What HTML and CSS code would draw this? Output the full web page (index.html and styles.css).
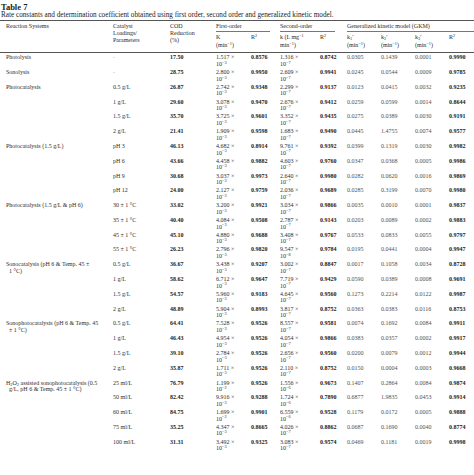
FILE: index.html
```html
<!DOCTYPE html>
<html>
<head>
<meta charset="utf-8">
<link rel="stylesheet" href="styles.css">
</head>
<body>
<div class="title">Table 7</div>
<div class="caption">Rate constants and determination coefficient obtained using first order, second order and generalized kinetic model.</div>
<table class="tbl">
<colgroup>
<col class="c1"><col class="c2"><col class="c3"><col class="c4"><col class="c5"><col class="c6"><col class="c7"><col class="c8"><col class="c9"><col class="c10"><col class="c11">
</colgroup>
<thead>
<tr class="h1">
<th class="first">Reaction Systems</th>
<th rowspan="2">Catalyst<br>Loadings/<br>Parameters</th>
<th rowspan="2">COD<br>Reduction<br>(%)</th>
<th colspan="2"><div class="grp g1">First-order</div></th>
<th colspan="2"><div class="grp g2">Second-order</div></th>
<th colspan="4"><div class="grp g3">Generalized kinetic model (GKM)</div></th>
</tr>
<tr class="h2">
<th class="first"></th>
<th>K<br>(min<sup>−1</sup>)</th>
<th>R<sup>2</sup></th>
<th>k (L mg<sup>−1</sup><br>min<sup>−1</sup>)</th>
<th>R<sup>2</sup></th>
<th>k<sub>1</sub>′<br>(min<sup>−1</sup>)</th>
<th>k<sub>2</sub>′<br>(min<sup>−1</sup>)</th>
<th>k<sub>3</sub>′<br>(min<sup>−1</sup>)</th>
<th>R<sup>2</sup></th>
</tr>
</thead>
<tbody id="body"></tbody>
</table>
<script src="app.js"></script>
</body>
</html>
```
FILE: styles.css
```css
html, body {
  margin: 0;
  padding: 0;
  background: #fff;
}
body {
  font-family: "Liberation Serif", "Times New Roman", serif;
  color: #333;
  width: 474px;
  overflow: hidden;
}
.title {
  font-weight: bold;
  font-size: 8.5px;
  line-height: 10px;
  padding: 2px 0 0 1px;
  color: #222;
}
.caption {
  font-size: 7.2px;
  line-height: 7.5px;
  padding-left: 1px;
  color: #222;
}
.tbl {
  width: 474px;
  table-layout: fixed;
  border-collapse: collapse;
  font-size: 6px;
}
.c1 { width: 113px; }
.c2 { width: 57px; }
.c3 { width: 46px; }
.c4 { width: 35px; }
.c5 { width: 29px; }
.c6 { width: 40px; }
.c7 { width: 27px; }
.c8 { width: 34px; }
.c9 { width: 34px; }
.c10 { width: 34px; }
.c11 { width: 25px; }
thead {
  border-top: 1.5px solid #555;
  border-bottom: 1.5px solid #555;
}
th {
  font-weight: normal;
  text-align: left;
  vertical-align: top;
  padding: 0;
  line-height: 7.4px;
  color: #2a2a2a;
}
th.first, td.first {
  padding-left: 6px;
}
.h1 th { padding-top: 2px; }
.grp {
  border-bottom: 1px solid #777;
  padding-bottom: 1px;
}
.g1 { margin-right: 10px; }
.g2 { margin-right: 12px; }
.g3 { margin-right: 0; }
.h2 th { padding-top: 2.5px; padding-bottom: 2.5px; }
sup, sub {
  font-size: 4.3px;
  line-height: 0;
  vertical-align: baseline;
  position: relative;
}
sup { top: -2.2px; }
sub { top: 1px; }
td {
  padding: 1.6px 0 0 0;
  vertical-align: top;
  line-height: 6.6px;
  height: 13.2px;
  white-space: nowrap;
  color: #2e2e2e;
}
td.b {
  font-weight: bold;
  color: #1a1a1a;
}
td.dash {
  color: #aaa;
}
td.sys .l2 {
  padding-left: 3px;
}
td.n {
  color: #505050;
}
```
FILE: app.js
```javascript
var rows = [
["Photolysis","-","17.50","1.517","-3","0.8576","1.316","-7","0.8742","0.0305","0.1439","0.0001","0.9990"],
["Sonolysis","-","28.75","2.800","-3","0.9950","2.609","-7","0.9941","0.0245","0.0544","0.0009","0.9785"],
["Photocatalysis","0.5 g/L","26.87","2.742","-3","0.9348","2.299","-7","0.9137","0.0123","0.0415","0.0032","0.9235"],
["","1 g/L","29.60","3.078","-3","0.9470","2.676","-7","0.9412","0.0259","0.0599","0.0014","0.8644"],
["","1.5 g/L","35.70","3.725","-3","0.9601","3.352","-7","0.9435","0.0275","0.0389","0.0030","0.9191"],
["","2 g/L","21.41","1.909","-3","0.9598","1.683","-7","0.9490","0.0445","1.4755","0.0074","0.9577"],
["Photocatalysis (1.5 g/L)","pH 3","46.13","4.682","-3","0.8914","9.761","-7","0.9392","0.0399","0.1319","0.0030","0.9982"],
["","pH 6","43.66","4.458","-3","0.9882","4.603","-7","0.9760","0.0347","0.0368","0.0005","0.9986"],
["","pH 9","30.68","3.037","-3","0.9973","2.640","-7","0.9980","0.0282","0.0620","0.0016","0.9869"],
["","pH 12","24.00","2.127","-3","0.9759","2.036","-7","0.9689","0.0285","0.3199","0.0070","0.9980"],
["Photocatalysis (1.5 g/L & pH 6)","30 ± 1 °C","33.02","3.200","-3","0.9921","3.034","-7","0.9866","0.0035","0.0010","0.0001","0.9837"],
["","35 ± 1 °C","40.40","4.084","-3","0.9508","2.787","-7","0.9143","0.0203","0.0089","0.0002","0.9883"],
["","45 ± 1 °C","45.10","4.880","-3","0.9688","3.408","-7","0.9767","0.0533","0.0833","0.0055","0.9797"],
["","55 ± 1 °C","26.23","2.796","-3","0.9820","9.547","-8","0.9784","0.0195","0.0441","0.0004","0.9947"],
["Sonocatalysis (pH 6 & Temp. 45 ±|1 °C)","0.5 g/L","36.67","3.438","-3","0.9207","3.002","-7","0.8847","0.0017","0.1058","0.0034","0.8728"],
["","1 g/L","58.62","6.712","-3","0.9647","7.719","-7","0.9429","0.0590","0.0389","0.0008","0.9691"],
["","1.5 g/L","54.57","5.960","-3","0.9183","4.645","-7","0.9560","0.1273","0.2214","0.0122","0.9987"],
["","2 g/L","48.89","5.904","-3","0.8993","3.817","-7","0.8752","0.0363","0.0383","0.0116","0.8753"],
["Sonophotocatalysis (pH 6 & Temp. 45|± 1 °C)","0.5 g/L","64.41","7.528","-3","0.9526","8.557","-7","0.9581","0.0074","0.1692","0.0084","0.9911"],
["","1 g/L","46.43","4.954","-3","0.9526","4.054","-7","0.9866","0.0383","0.0357","0.0002","0.9917"],
["","1.5 g/L","39.10","2.784","-3","0.9526","2.656","-7","0.9560","0.0200","0.0079","0.0012","0.9944"],
["","2 g/L","35.87","1.711","-3","0.9526","2.110","-7","0.8752","0.0150","0.0004","0.0003","0.9668"],
["H<sub>2</sub>O<sub>2</sub> assisted sonophotocatalysis (0.5|g/L, pH 6 & Temp. 45 ± 1 °C)","25 ml/L","76.79","1.199","-2","0.9526","1.556","-6","0.9673","0.1407","0.2864","0.0084","0.9874"],
["","50 ml/L","82.42","9.916","-3","0.9288","1.724","-6","0.7890","0.6877","1.9835","0.0453","0.9914"],
["","60 ml/L","84.75","1.699","-2","0.9901","6.559","-6","0.9528","0.1179","0.0172","0.0005","0.9888"],
["","75 ml/L","35.25","4.347","-3","0.8665","4.026","-7","0.8862","0.0687","0.1690","0.0040","0.8774"],
["","100 ml/L","31.31","3.492","-3","0.9325","3.083","-7","0.9574","0.0469","0.1181","0.0019","0.9998"]
];
function sci(v, e) {
  return v + " \u00d7<br>10<sup>" + e.replace("-", "\u2212") + "</sup>";
}
var html = "";
rows.forEach(function (r) {
  var sys = r[0].split("|");
  var sysHtml = sys[0] + (sys[1] ? "<br><span class=\"l2\">" + sys[1] + "</span>" : "");
  html += "<tr>";
  html += "<td class=\"first sys\">" + sysHtml + "</td>";
  html += "<td" + (r[1] === "-" ? " class=\"dash\"" : "") + ">" + r[1] + "</td>";
  html += "<td class=\"b\">" + r[2] + "</td>";
  html += "<td>" + sci(r[3], r[4]) + "</td>";
  html += "<td class=\"b\">" + r[5] + "</td>";
  html += "<td>" + sci(r[6], r[7]) + "</td>";
  html += "<td class=\"b\">" + r[8] + "</td>";
  html += "<td class=\"n\">" + r[9] + "</td>";
  html += "<td class=\"n\">" + r[10] + "</td>";
  html += "<td class=\"n\">" + r[11] + "</td>";
  html += "<td class=\"b\">" + r[12] + "</td>";
  html += "</tr>";
});
document.getElementById("body").innerHTML = html;
```
